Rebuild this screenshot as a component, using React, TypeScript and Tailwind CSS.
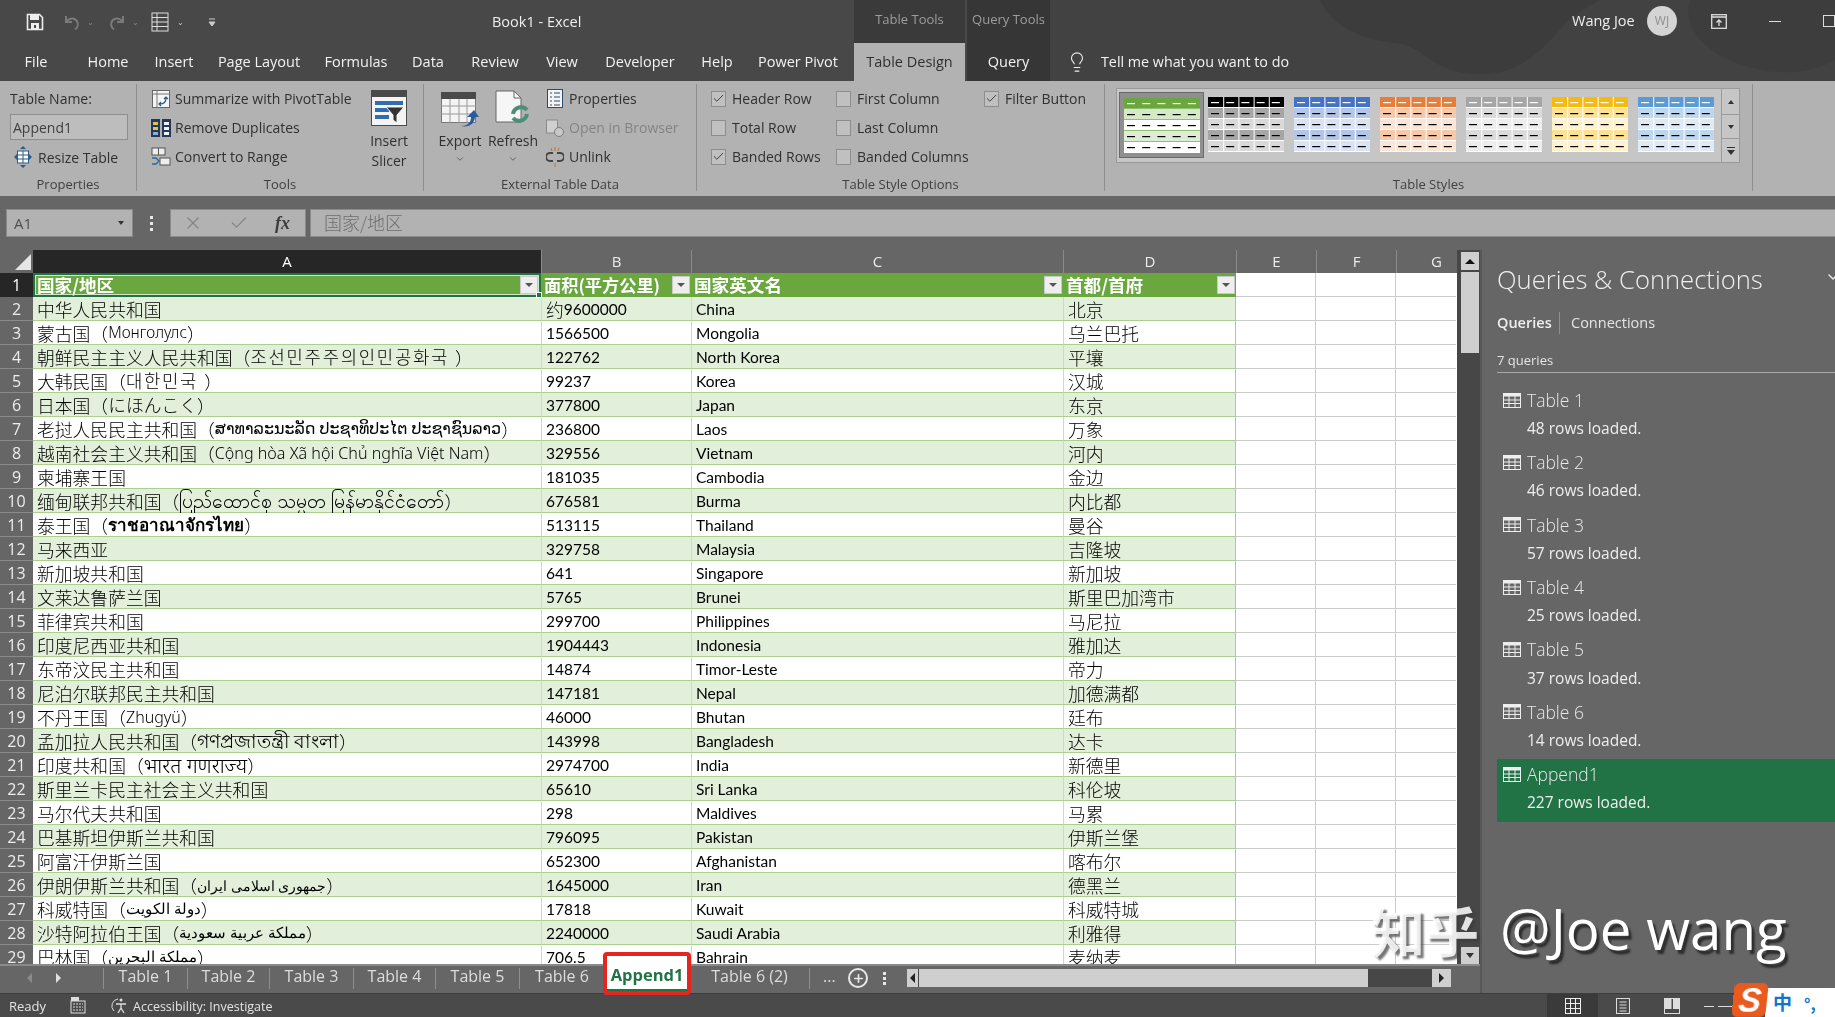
import { ChevronDown, Lightbulb, Plus, X, Check } from 'lucide-react'

const ui = 'font-["Open_Sans","Noto_Sans_CJK_SC",sans-serif]'

type Row = { name: string; native?: string; nativeClass?: string; area: string; en: string; capital: string }

const rows: Row[] = [
  { name: '中华人民共和国', area: '9600000', en: 'China', capital: '北京' },
  { name: '蒙古国', native: 'Монголулс', nativeClass: 'text-[15.5px]', area: '1566500', en: 'Mongolia', capital: '乌兰巴托' },
  { name: '朝鲜民主主义人民共和国', native: '조선민주주의인민공화국', nativeClass: 'tracking-[1.7px] mr-[6px]', area: '122762', en: 'North Korea', capital: '平壤' },
  { name: '大韩民国', native: '대한민국', nativeClass: 'tracking-[1.7px] mr-[6px]', area: '99237', en: 'Korea', capital: '汉城' },
  { name: '日本国', native: 'にほんこく', area: '377800', en: 'Japan', capital: '东京' },
  { name: '老挝人民民主共和国', native: 'ສາທາລະນະລັດ ປະຊາທິປະໄຕ ປະຊາຊົນລາວ', nativeClass: 'text-[15.9px] font-normal', area: '236800', en: 'Laos', capital: '万象' },
  { name: '越南社会主义共和国', native: 'Cộng hòa Xã hội Chủ nghĩa Việt Nam', nativeClass: 'text-[16.1px]', area: '329556', en: 'Vietnam', capital: '河内' },
  { name: '柬埔寨王国', area: '181035', en: 'Cambodia', capital: '金边' },
  { name: '缅甸联邦共和国', native: 'ပြည်ထောင်စု သမ္မတ မြန်မာနိုင်ငံတော်', nativeClass: 'text-[19.4px]', area: '676581', en: 'Burma', capital: '内比都' },
  { name: '泰王国', native: 'ราชอาณาจักรไทย', nativeClass: 'text-[17px] font-bold', area: '513115', en: 'Thailand', capital: '曼谷' },
  { name: '马来西亚', area: '329758', en: 'Malaysia', capital: '吉隆坡' },
  { name: '新加坡共和国', area: '641', en: 'Singapore', capital: '新加坡' },
  { name: '文莱达鲁萨兰国', area: '5765', en: 'Brunei', capital: '斯里巴加湾市' },
  { name: '菲律宾共和国', area: '299700', en: 'Philippines', capital: '马尼拉' },
  { name: '印度尼西亚共和国', area: '1904443', en: 'Indonesia', capital: '雅加达' },
  { name: '东帝汶民主共和国', area: '14874', en: 'Timor-Leste', capital: '帝力' },
  { name: '尼泊尔联邦民主共和国', area: '147181', en: 'Nepal', capital: '加德满都' },
  { name: '不丹王国', native: 'Zhugyü', nativeClass: 'text-[16px]', area: '46000', en: 'Bhutan', capital: '廷布' },
  { name: '孟加拉人民共和国', native: 'গণপ্রজাতন্ত্রী বাংলা', nativeClass: 'text-[18.5px]', area: '143998', en: 'Bangladesh', capital: '达卡' },
  { name: '印度共和国', native: 'भारत गणराज्य', nativeClass: 'text-[20.5px]', area: '2974700', en: 'India', capital: '新德里' },
  { name: '斯里兰卡民主社会主义共和国', area: '65610', en: 'Sri Lanka', capital: '科伦坡' },
  { name: '马尔代夫共和国', area: '298', en: 'Maldives', capital: '马累' },
  { name: '巴基斯坦伊斯兰共和国', area: '796095', en: 'Pakistan', capital: '伊斯兰堡' },
  { name: '阿富汗伊斯兰国', area: '652300', en: 'Afghanistan', capital: '喀布尔' },
  { name: '伊朗伊斯兰共和国', native: 'جمهوری اسلامی ایران', nativeClass: 'text-[14px]', area: '1645000', en: 'Iran', capital: '德黑兰' },
  { name: '科威特国', native: 'دولة الكويت', nativeClass: 'text-[14.5px]', area: '17818', en: 'Kuwait', capital: '科威特城' },
  { name: '沙特阿拉伯王国', native: 'مملكة عربية سعودية', nativeClass: 'text-[14.5px]', area: '2240000', en: 'Saudi Arabia', capital: '利雅得' },
  { name: '巴林国', native: 'مملكة البحرين', nativeClass: 'text-[14.5px]', area: '706.5', en: 'Bahrain', capital: '麦纳麦' },
]

const gridCols = 'grid grid-cols-[33px_508px_150px_372px_173px_80px_80px_60px]'

const tabs = [
  ['File', 'w-[72px]'],
  ['Home', 'w-[72px]'],
  ['Insert', 'w-[60px]'],
  ['Page Layout', 'w-[110px]'],
  ['Formulas', 'w-[84px]'],
  ['Data', 'w-[60px]'],
  ['Review', 'w-[74px]'],
  ['View', 'w-[60px]'],
  ['Developer', 'w-[96px]'],
  ['Help', 'w-[58px]'],
  ['Power Pivot', 'w-[104px]'],
]

const queries = [
  ['Table 1', '48'],
  ['Table 2', '46'],
  ['Table 3', '57'],
  ['Table 4', '25'],
  ['Table 5', '37'],
  ['Table 6', '14'],
  ['Append1', '227'],
]

const styleThumbs = [
  { head: '#000000', a: '#a6a6a6', b: '#d9d9d9', sep: '#ffffff' },
  { head: '#4472c4', a: '#b4c6e7', b: '#dae3f3', sep: '#ffffff' },
  { head: '#e67e3a', a: '#f6c9ab', b: '#fbe5d6', sep: '#ffffff' },
  { head: '#a5a5a5', a: '#dbdbdb', b: '#ededed', sep: '#ffffff' },
  { head: '#f5b90f', a: '#fbe295', b: '#fff2cc', sep: '#ffffff' },
  { head: '#5b9bd5', a: '#bdd7ee', b: '#deebf7', sep: '#ffffff' },
]

function Thumb({ head, a, b, sep }: { head: string; a: string; b: string; sep: string }) {
  const fills = [head, a, b, a, b]
  return (
    <svg width="76" height="55" viewBox="0 0 76 55" className="shrink-0">
      {fills.map((f, r) => (
        <g key={r}>
          <rect x="0" y={r * 11} width="76" height="11" fill={f} />
          <rect x="0" y={r * 11 + 10} width="76" height="1" fill={sep} />
          {[0, 1, 2, 3, 4].map(c => (
            <rect key={c} x={c * 15.2 + 3} y={r * 11 + 5} width="8" height="1.2" fill={r === 0 ? '#fff' : '#000'} />
          ))}
          {[1, 2, 3, 4].map(c => (
            <rect key={c} x={c * 15.2} y={r * 11} width="1" height="11" fill={sep} />
          ))}
        </g>
      ))}
    </svg>
  )
}

function GreenThumb() {
  const fills = ['#6aa83f', '#d5e8c8', '#ffffff', '#ddecd2', '#ffffff']
  return (
    <svg width="76" height="55" viewBox="0 0 76 55">
      {fills.map((f, r) => (
        <g key={r}>
          <rect x="0" y={r * 11} width="76" height="11" fill={f} />
          <rect x="0" y={r * 11 + 10} width="76" height="1" fill={r === 4 ? '#ffffff' : '#8fbf6f'} />
          {[0, 1, 2, 3, 4].map(c => (
            <rect key={c} x={c * 15.2 + 3} y={r * 11 + 5} width="8" height="1.2" fill={r === 0 ? '#fff' : '#000'} />
          ))}
        </g>
      ))}
    </svg>
  )
}

function TableIcon() {
  return (
    <svg width="18" height="15" viewBox="0 0 18 15">
      <rect x="0.5" y="0.5" width="17" height="14" fill="none" stroke="#eee" />
      <rect x="0" y="0" width="18" height="3.5" fill="#eee" />
      <path d="M0 7h18M0 10.5h18M6 3v12M12 3v12" stroke="#eee" fill="none" />
    </svg>
  )
}

function FilterBtn() {
  return (
    <span className="w-[18px] h-[18px] bg-[#eeeeee] flex items-center justify-center shrink-0 mr-[1px] border border-[#c8c8c8]">
      <span className="w-0 h-0 border-l-[4px] border-r-[4px] border-t-[4px] border-l-transparent border-r-transparent border-t-[#555]" />
    </span>
  )
}

function Box({ on }: { on?: boolean }) {
  return (
    <span className="w-[15px] h-[16px] bg-[#c0c0c0] border border-[#8d8d8d] flex items-center justify-center shrink-0">
      {on && <Check size={13} strokeWidth={1.5} className="text-[#222]" />}
    </span>
  )
}

function Opt({ label, on }: { label: string; on?: boolean }) {
  return (
    <div className="h-[29px] flex items-center gap-[6px]">
      <Box on={on} />
      <span className="whitespace-nowrap">{label}</span>
    </div>
  )
}

function SmallBtn({ icon, label, muted }: { icon: React.ReactNode; label: string; muted?: boolean }) {
  return (
    <div className={`h-[29px] flex items-center gap-1 whitespace-nowrap ${muted ? 'text-[#848484]' : ''}`}>
      <span className="w-5 h-5 flex items-center justify-center shrink-0">{icon}</span>
      {label}
    </div>
  )
}

function GroupLabel({ children }: { children: React.ReactNode }) {
  return <div className="h-5 shrink-0 mt-[4px] flex items-center justify-center text-[13px] text-[#404040] whitespace-nowrap">{children}</div>
}

function App() {
  return (
    <div className={`w-[1835px] h-[1017px] overflow-hidden relative flex flex-col bg-[#666666] text-[#303030] text-[14px] ${ui}`}>
      {/* title bar */}
      <div className="h-[43px] flex bg-[#484848] text-[#eeeeee] relative">
        <div className="w-[854px] flex items-center pl-[26px] gap-[18px] relative">
          <svg width="18" height="18" viewBox="0 0 18 18">
            <path d="M1.5 1.5h12l3 3v12h-15z" fill="none" stroke="#eee" strokeWidth="1.6" />
            <rect x="4" y="2" width="9" height="5" fill="#eee" />
            <rect x="5" y="10" width="8" height="6" fill="#eee" />
            <rect x="8" y="12" width="2" height="3" fill="#484848" />
          </svg>
          <svg width="18" height="18" viewBox="0 0 18 18" className="ml-[1px]">
            <path d="M3 3v6h6M3.5 8.5C6 5 11 4.5 13.5 7.5s1.5 7-1.5 9" fill="none" stroke="#7a7a7a" strokeWidth="2" />
          </svg>
          <span className="text-[#8a8a8a] text-[8px] -ml-[12px]">⌄</span>
          <svg width="18" height="18" viewBox="0 0 18 18" className="-ml-[4px]">
            <path d="M15 3v6H9M14.5 8.5C12 5 7 4.5 4.5 7.5s-1.5 7 1.5 9" fill="none" stroke="#7a7a7a" strokeWidth="2" />
          </svg>
          <span className="text-[#8a8a8a] text-[8px] -ml-[12px]">⌄</span>
          <svg width="18" height="20" viewBox="0 0 18 20" className="-ml-[6px]">
            <rect x="1" y="1" width="16" height="18" fill="none" stroke="#ddd" />
            <path d="M1 5.5h16M1 10h16M1 14.5h16M6 1v18" stroke="#ddd" />
          </svg>
          <span className="text-[#ccc] text-[8px] -ml-[10px]">⌄</span>
          <svg width="8" height="10" viewBox="0 0 8 10" className="ml-[6px]">
            <path d="M1 2h6M1 5h6l-3 4z" fill="#ccc" stroke="#ccc" />
          </svg>
          <span className="absolute left-[492px] top-[11px] text-[14.5px] whitespace-nowrap">Book1 - Excel</span>
        </div>
        <div className="w-[111px] bg-[#3a3a3a] text-[#9d9d9d] text-[13px] flex items-center justify-center pb-[3px]">Table Tools</div>
        <div className="w-[2px]" />
        <div className="w-[83px] bg-[#363636] text-[#9d9d9d] text-[13px] flex items-center justify-center pb-[3px]">Query Tools</div>
        <div className="flex-1 flex items-center bg-[#424242] pl-[522px] pb-[1px]">
          <span className="text-[14.5px] whitespace-nowrap w-[75px]">Wang Joe</span>
          <span className="w-[30px] h-[30px] rounded-full bg-[#d4d4d4] text-[#8f8f8f] text-[12px] flex items-center justify-center">WJ</span>
          <svg width="16" height="15" viewBox="0 0 16 15" className="ml-[34px]">
            <rect x="0.7" y="0.7" width="14.6" height="13.6" fill="none" stroke="#eee" strokeWidth="1.3" />
            <path d="M1 3h14M8 12V6M5.5 8.5L8 6l2.5 2.5" stroke="#eee" fill="none" strokeWidth="1.3" />
          </svg>
          <span className="w-[12px] h-[1px] bg-[#eee] ml-[42px]" />
          <span className="w-[12px] h-[12px] border border-[#eee] ml-[42px] shrink-0" />
        </div>
      </div>

      {/* ribbon tabs */}
      <div className="h-[38px] flex bg-[#484848] text-[#f2f2f2] text-[14.5px]">
        {tabs.map(([label, w]) => (
          <div key={label} className={`${w} flex items-center justify-center whitespace-nowrap`}>{label}</div>
        ))}
        <div className="w-[4px]" />
        <div className="w-[111px] bg-[#b2b2b2] text-[#303030] flex items-center justify-center whitespace-nowrap">Table Design</div>
        <div className="w-[2px]" />
        <div className="w-[83px] bg-[#363636] flex items-center justify-center">Query</div>
        <div className="flex-1 flex items-center bg-[#424242] pl-[16px]">
          <Lightbulb size={22} strokeWidth={1.2} className="text-[#eee]" />
          <span className="ml-[13px] text-[14.3px] whitespace-nowrap">Tell me what you want to do</span>
        </div>
      </div>

      {/* office theme artwork behind the title bar */}
      <svg width="785" height="81" viewBox="0 0 785 81" className="absolute left-[1050px] top-0 mix-blend-multiply pointer-events-none">
        <path d="M270 0c10 25 40 40 80 44 25 4 30 26 70 30 50 4 70-24 90-44 10-14 30-24 40-30z" fill="#e6e6e6" />
        <path d="M640 0c-10 30 20 60 70 70 30 6 60 0 75-10V0z" fill="#ececec" />
      </svg>

      {/* ribbon */}
      <div className="h-[115px] flex bg-[#b2b2b2] text-[14px]">
        <div className="w-[137px] h-[107px] mt-[3px] border-r border-[#8e8e8e] flex flex-col">
          <div className="h-[87px] shrink-0 pl-[10px]">
            <div className="h-[29px] flex items-center">Table Name:</div>
            <div className="h-[26px] mt-[1px] w-[118px] bg-[#bdbdbd] border border-[#8e8e8e] flex items-center pl-[2px] text-[#404040]">Append1</div>
            <div className="h-[34px] flex items-center gap-[6px] pl-[4px]">
              <svg width="18" height="22" viewBox="0 0 18 22">
                <path d="M9 0l3 3H6zM9 22l3-3H6zM0 11l3-3v6zM18 11l-3-3v6z" fill="#2b5c8a" />
                <rect x="3.5" y="5" width="11" height="12" fill="#fff" stroke="#2b5c8a" />
                <path d="M4 9h10M4 13h10M9 5v12" stroke="#2b5c8a" />
              </svg>
              <span className="whitespace-nowrap">Resize Table</span>
            </div>
          </div>
          <GroupLabel>Properties</GroupLabel>
        </div>

        <div className="w-[287px] h-[107px] mt-[3px] border-r border-[#8e8e8e] flex flex-col">
          <div className="h-[87px] shrink-0 flex">
            <div className="w-[234px] pl-[14px]">
              <SmallBtn label="Summarize with PivotTable" icon={
                <svg width="18" height="18" viewBox="0 0 18 18"><rect x="0.5" y="0.5" width="17" height="17" fill="#f4f4f4" stroke="#666" /><path d="M0 4h18M5 0v18" stroke="#777" /><path d="M8 14c4 0 6-2 6-6M12 9l2-2 2 2M9 12l-2 2 2 2" stroke="#1f5a8a" fill="none" strokeWidth="1.2" /></svg>
              } />
              <SmallBtn label="Remove Duplicates" icon={
                <svg width="20" height="18" viewBox="0 0 20 18"><rect x="0" y="0" width="9" height="18" fill="#26385a" /><rect x="11" y="0" width="9" height="18" fill="#26385a" /><rect x="2" y="3" width="5" height="3" fill="#e2c14a" /><rect x="2" y="8" width="5" height="3" fill="#e2c14a" /><rect x="2" y="13" width="5" height="3" fill="#85b0d8" /><rect x="13" y="3" width="5" height="3" fill="#f2f2f2" /><rect x="13" y="8" width="5" height="3" fill="#f2f2f2" /><rect x="13" y="13" width="5" height="3" fill="#f2f2f2" /></svg>
              } />
              <SmallBtn label="Convert to Range" icon={
                <svg width="20" height="20" viewBox="0 0 20 20"><rect x="1" y="1" width="13" height="7" fill="#eee" stroke="#555" /><path d="M7.5 1v7" stroke="#555" /><path d="M1 11h4l3 3-3 3H1" stroke="#2b6aa0" fill="none" strokeWidth="1.4" /><rect x="9" y="11" width="10" height="7" fill="#eee" stroke="#555" /></svg>
              } />
            </div>
            <div className="w-[36px] flex flex-col items-center shrink-0">
              <svg width="36" height="36" viewBox="0 0 36 36" className="mt-[6px] shrink-0">
                <rect x="0.5" y="0.5" width="35" height="35" fill="#f4f4f4" stroke="#4a4a4a" />
                <rect x="0" y="0" width="36" height="7" fill="#4a4a4a" />
                <rect x="4" y="11" width="28" height="4" fill="#2f6cb0" />
                <rect x="4" y="18" width="14" height="4" fill="#2f6cb0" />
                <rect x="4" y="25" width="14" height="4" fill="#2f6cb0" />
                <path d="M15 17h18l-7 8v8l-4-3v-5z" fill="#333" stroke="#f4f4f4" />
              </svg>
              <div className="mt-[5px] leading-[20px] text-center">Insert<br />Slicer</div>
            </div>
          </div>
          <GroupLabel>Tools</GroupLabel>
        </div>

        <div className="w-[273px] h-[107px] mt-[3px] border-r border-[#8e8e8e] flex flex-col">
          <div className="h-[87px] shrink-0 flex pl-[6px]">
            <div className="w-[60px] flex flex-col items-center">
              <svg width="38" height="36" viewBox="0 0 38 36" className="mt-[8px] shrink-0">
                <rect x="0.5" y="0.5" width="34" height="30" fill="#f4f4f4" stroke="#777" />
                <rect x="0" y="0" width="35" height="7" fill="#4a4a4a" />
                <path d="M0 14h35M0 22h35M9 7v24M18 7v24M26 7v24" stroke="#999" />
                <path d="M20 34c6 0 10-3 10-9h-4l7-7 5 7h-4c0 6-6 11-14 9z" fill="#2b5c9e" />
              </svg>
              <div className="mt-[3px] h-5 leading-5">Export</div>
              <ChevronDown size={10} className="mt-[3px] text-[#555]" />
            </div>
            <div className="w-[46px] flex flex-col items-center">
              <svg width="36" height="38" viewBox="0 0 36 38" className="mt-[6px] shrink-0">
                <path d="M1 1h18l7 7v24H1z" fill="#f6f6f6" stroke="#666" />
                <path d="M19 1v7h7" fill="none" stroke="#666" />
                <path d="M18 24a8 8 0 0 1 14-4M32 24a8 8 0 0 1-14 4" fill="none" stroke="#4c8f78" strokeWidth="4" />
              </svg>
              <div className="mt-[3px] h-5 leading-5">Refresh</div>
              <ChevronDown size={10} className="mt-[3px] text-[#555]" />
            </div>
            <div className="ml-[9px]">
              <SmallBtn label="Properties" icon={
                <svg width="16" height="19" viewBox="0 0 16 19"><rect x="0.5" y="0.5" width="15" height="18" fill="#f4f4f4" stroke="#2e4a6b" /><path d="M3 4h2M7 4h6M3 8h2M7 8h6M3 12h2M7 12h6M3 16h2M7 16h6" stroke="#2e4a6b" /></svg>
              } />
              <SmallBtn muted label="Open in Browser" icon={
                <svg width="18" height="18" viewBox="0 0 18 18"><rect x="0.5" y="1" width="11" height="13" fill="#d0d0d0" stroke="#8a8a8a" /><circle cx="13" cy="13" r="4.5" fill="#c8c8c8" stroke="#7d7d7d" /></svg>
              } />
              <SmallBtn label="Unlink" icon={
                <svg width="18" height="20" viewBox="0 0 18 20"><path d="M7 6H4a4 4 0 0 0 0 8h3M11 6h3a4 4 0 0 1 0 8h-3" fill="none" stroke="#444" strokeWidth="2" /><path d="M9 0v4M9 16v4M5 1l1 3M13 1l-1 3" stroke="#b5743a" /></svg>
              } />
            </div>
          </div>
          <GroupLabel>External Table Data</GroupLabel>
        </div>

        <div className="w-[408px] h-[107px] mt-[3px] border-r border-[#8e8e8e] flex flex-col">
          <div className="h-[87px] shrink-0 flex pl-[14px]">
            <div className="w-[125px]">
              <Opt label="Header Row" on />
              <Opt label="Total Row" />
              <Opt label="Banded Rows" on />
            </div>
            <div className="w-[148px]">
              <Opt label="First Column" />
              <Opt label="Last Column" />
              <Opt label="Banded Columns" />
            </div>
            <Opt label="Filter Button" on />
          </div>
          <GroupLabel>Table Style Options</GroupLabel>
        </div>

        <div className="w-[648px] h-[107px] mt-[3px] border-r border-[#8e8e8e] flex flex-col">
          <div className="h-[87px] shrink-0 pl-[11px] pt-[4px]">
            <div className="w-[624px] h-[75px] bg-[#c6c6c6] border border-[#9a9a9a] flex">
              <div className="ml-[2px] mt-[3px] w-[85px] h-[66px] bg-[#8f8f8f] border border-[#6a6a6a] flex items-center justify-center shrink-0">
                <GreenThumb />
              </div>
              <div className="flex gap-[10px] ml-[4px] mt-[8px] h-[55px]">
                {styleThumbs.map(t => <Thumb key={t.head} {...t} />)}
              </div>
              <div className="ml-auto w-[18px] flex flex-col border-l border-[#9a9a9a] text-[#333]">
                <div className="h-[26px] flex items-center justify-center border-b border-[#9a9a9a]"><span className="w-0 h-0 border-l-[3px] border-r-[3px] border-b-[4px] border-l-transparent border-r-transparent border-b-[#333]" /></div>
                <div className="h-[24px] flex items-center justify-center border-b border-[#9a9a9a]"><span className="w-0 h-0 border-l-[3px] border-r-[3px] border-t-[4px] border-l-transparent border-r-transparent border-t-[#333]" /></div>
                <div className="flex-1 flex flex-col items-center justify-center gap-[2px]"><span className="w-[8px] h-[1px] bg-[#333]" /><span className="w-0 h-0 border-l-[4px] border-r-[4px] border-t-[5px] border-l-transparent border-r-transparent border-t-[#333]" /></div>
              </div>
            </div>
          </div>
          <GroupLabel>Table Styles</GroupLabel>
        </div>
      </div>

      {/* formula bar */}
      <div className="h-[13px] bg-[#666666] shrink-0" />
      <div className="h-[28px] flex items-stretch pl-[6px] shrink-0">
        <div className="w-[127px] bg-[#b2b2b2] border border-[#8a8a8a] flex items-center justify-between pl-[7px] pr-[8px] text-[#505050] text-[15px]">
          A1
          <span className="w-0 h-0 border-l-[3px] border-r-[3px] border-t-[4px] border-l-transparent border-r-transparent border-t-[#333]" />
        </div>
        <div className="w-[37px] flex flex-col items-center justify-center gap-[3px]">
          <span className="w-[3px] h-[3px] bg-[#e8e8e8]" />
          <span className="w-[3px] h-[3px] bg-[#e8e8e8]" />
          <span className="w-[3px] h-[3px] bg-[#e8e8e8]" />
        </div>
        <div className="w-[136px] bg-[#b2b2b2] border border-[#8a8a8a] flex items-center pl-[12px]">
          <X size={20} strokeWidth={1.5} className="text-[#858585]" />
          <Check size={20} strokeWidth={1.5} className="text-[#858585] ml-[26px]" />
          <span className="ml-[26px] italic font-bold font-['Liberation_Serif',serif] text-[18px] text-[#3c3c3c]">fx</span>
        </div>
        <div className="flex-1 ml-[4px] bg-[#b2b2b2] border-y border-[#8a8a8a] border-l flex items-center pl-[13px] pb-[2px] text-[#6e6e6e] text-[18px] font-['Noto_Sans_CJK_SC',sans-serif] font-light">国家/地区</div>
      </div>
      <div className="h-[13px] bg-[#666666] shrink-0" />

      {/* sheet + pane */}
      <div className="flex-1 flex min-h-0">
        <div className="w-[1482px] flex flex-col min-h-0 border-r-2 border-[#575757]">
          <div className="flex-1 flex min-h-0">
            <div className="w-[1457px] overflow-hidden bg-white flex flex-col">
              {/* column headers */}
              <div className={`${gridCols} grid-rows-[23px] h-[23px] shrink-0 bg-[#666666] text-[#ececec] text-[15px]`}>
                <div className="flex items-end justify-end pr-[2px] pb-[3px]">
                  <svg width="16" height="16" viewBox="0 0 16 16"><path d="M16 0v16H0z" fill="#e6e6e6" /></svg>
                </div>
                <div className="bg-[#262626] text-white flex items-center justify-center">A</div>
                {['B', 'C', 'D', 'E', 'F'].map(c => (
                  <div key={c} className="flex items-center justify-center border-l border-[#8a8a8a]">{c}</div>
                ))}
                <div className="flex items-center justify-center border-l border-[#8a8a8a] pl-[20px]">G</div>
              </div>

              {/* table header */}
              <div className={`${gridCols} grid-rows-[24px] h-6 shrink-0 text-white font-bold text-[17.6px] font-['Noto_Sans_CJK_SC',sans-serif]`}>
                <div className="bg-[#262626] font-normal text-[16px] text-white flex items-center justify-center font-['Open_Sans',sans-serif]">1</div>
                <div className="bg-[#6aa83f] border-2 border-[#217346] outline outline-[#d0e6c4] -outline-offset-3 flex items-center justify-between pl-[2px] relative">
                  <span>国家/地区</span>
                  <FilterBtn />
                  <span className="absolute -right-[3px] -bottom-[3px] w-[6px] h-[6px] bg-[#217346] border border-white" />
                </div>
                <div className="bg-[#6aa83f] flex items-center justify-between pl-[3px] overflow-hidden"><span className="text-[17.2px] whitespace-nowrap">面积(平方公里)</span><FilterBtn /></div>
                <div className="bg-[#6aa83f] flex items-center justify-between pl-[3px]"><span>国家英文名</span><FilterBtn /></div>
                <div className="bg-[#6aa83f] flex items-center justify-between pl-[3px]"><span>首都/首府</span><FilterBtn /></div>
                <div className="border-b border-[#cccccc] border-r" />
                <div className="border-b border-[#cccccc] border-r" />
                <div className="border-b border-[#cccccc]" />
              </div>

              {/* data rows */}
              {rows.map((r, i) => {
                const band = i % 2 === 0 ? 'bg-[#e2efda]' : 'bg-white'
                return (
                  <div key={r.name} className={`${gridCols} grid-rows-[24px] h-6 shrink-0 text-black`}>
                    <div className="bg-[#666666] text-[#ececec] border-b border-[#8a8a8a] text-[16px] flex items-center justify-center">{i + 2}</div>
                    <div className={`${band} border-b border-[#a9d08e] pl-1 pt-[1px] flex items-center whitespace-nowrap text-[17.8px] font-light font-['Noto_Sans_CJK_SC',sans-serif]`}>
                      {r.name}
                      {r.native && (
                        <>
                          （<span className={`font-['Noto_Sans','Noto_Sans_CJK_SC','DejaVu_Sans',sans-serif] ${r.nativeClass ?? ''}`}>{r.native}</span>）
                        </>
                      )}
                    </div>
                    <div className={`${band} border-b border-l border-b-[#a9d08e] border-l-[#d4d4d4] pl-1 pt-[2px] flex items-center text-[15.5px] font-['Lato',sans-serif]`}>
                      {i === 0 && <span className="text-[17.8px] font-light font-['Noto_Sans_CJK_SC',sans-serif]">约</span>}
                      {r.area}
                    </div>
                    <div className={`${band} border-b border-l border-b-[#a9d08e] border-l-[#d4d4d4] pl-1 pt-[2px] flex items-center text-[15.5px] font-['Lato',sans-serif]`}>{r.en}</div>
                    <div className={`${band} border-b border-l border-r border-b-[#a9d08e] border-l-[#d4d4d4] border-r-[#a9d08e] pl-1 pt-[1px] flex items-center text-[17.8px] font-light font-['Noto_Sans_CJK_SC',sans-serif]`}>{r.capital}</div>
                    <div className="bg-white border-b border-r border-[#cccccc]" />
                    <div className="bg-white border-b border-r border-[#cccccc]" />
                    <div className="bg-white border-b border-[#cccccc]" />
                  </div>
                )
              })}
            </div>

            {/* vertical scrollbar */}
            <div className="w-[23px] bg-[#474747] flex flex-col items-center pl-[3px] pt-[2px]">
              <div className="w-[18px] h-[18px] bg-[#cfcfcf] flex items-center justify-center"><span className="w-0 h-0 border-l-[5px] border-r-[5px] border-b-[5px] border-l-transparent border-r-transparent border-b-[#111]" /></div>
              <div className="w-[18px] h-[81px] mt-[2px] bg-[#cfcfcf]" />
              <div className="mt-auto w-[18px] h-[17px] bg-[#cfcfcf] flex items-center justify-center"><span className="w-0 h-0 border-l-[4px] border-r-[4px] border-t-[5px] border-l-transparent border-r-transparent border-t-[#333]" /></div>
            </div>
          </div>

          {/* sheet tabs */}
          <div className="h-[29px] shrink-0 flex items-center pb-[3px] border-t-2 border-[#8a8a8a] text-[#dddddd] text-[16px]">
            <div className="w-[103px] flex items-center pl-[27px] gap-[24px] text-[10px]">
              <span className="w-0 h-0 border-r-[5px] border-y-[5px] border-y-transparent border-r-[#8a8a8a]" />
              <span className="w-0 h-0 border-l-[5px] border-y-[5px] border-y-transparent border-l-[#e0e0e0]" />
            </div>
            {[['Table 1', 'w-[84px]'], ['Table 2', 'w-[82px]'], ['Table 3', 'w-[84px]'], ['Table 4', 'w-[82px]'], ['Table 5', 'w-[84px]'], ['Table 6', 'w-[85px]']].map(([t, w]) => (
              <div key={t} className={`${w} h-[21px] border-l border-[#8f8f8f] flex items-center justify-center whitespace-nowrap pb-[5px]`}>{t}</div>
            ))}
            <div className="w-[86px] h-[28px] bg-white text-[#217346] text-[16.5px] font-bold flex items-center justify-center border-b-[3px] border-[#217346] whitespace-nowrap pb-[2px]">Append1</div>
            <div className="w-[120px] h-[21px] border-r border-[#8f8f8f] flex items-center justify-center whitespace-nowrap pb-[5px]">Table 6 (2)</div>
            <span className="ml-[13px] w-[20px] pb-[5px]">...</span>
            <span className="ml-[5px] w-[20px] h-[20px] rounded-full border-2 border-[#e8e8e8] flex items-center justify-center"><Plus size={13} strokeWidth={3} className="text-[#e8e8e8]" /></span>
            <span className="ml-[15px] flex flex-col gap-[2px]"><span className="w-[3px] h-[3px] bg-[#e8e8e8]" /><span className="w-[3px] h-[3px] bg-[#e8e8e8]" /><span className="w-[3px] h-[3px] bg-[#e8e8e8]" /></span>
            <div className="ml-[21px] w-[544px] h-[18px] bg-[#474747] flex">
              <span className="w-[11px] bg-[#cfcfcf] flex items-center justify-center"><span className="w-0 h-0 border-r-[5px] border-y-[5px] border-y-transparent border-r-[#222]" /></span>
              <span className="w-[449px] ml-[1px] bg-[#cfcfcf]" />
              <span className="ml-auto w-[19px] bg-[#cfcfcf] flex items-center justify-center"><span className="w-0 h-0 border-l-[5px] border-y-[5px] border-y-transparent border-l-[#222]" /></span>
            </div>
          </div>
        </div>

        {/* queries pane */}
        <div className="flex-1 pl-[15px] text-[#eeeeee] relative">
          <div className="text-[25.6px] font-light leading-[36px] mt-[12px] whitespace-nowrap">Queries &amp; Connections</div>
          <ChevronDown size={16} className="absolute right-[-6px] top-[19px] text-[#eee]" />
          <div className="flex items-center h-[24px] mt-[13px] text-[14.5px]">
            <span className="font-semibold w-[62px]">Queries</span>
            <span className="w-[1px] h-[22px] bg-[#8f8f8f]" />
            <span className="ml-[11px] text-[#e4e4e4]">Connections</span>
          </div>
          <div className="mt-[14px] h-[24px] flex items-center text-[13px] border-b border-[#a8a8a8] text-[#e4e4e4]">7 queries</div>
          <div className="mt-[12px]">
            {queries.map(([name, n]) => (
              <div key={name} className={`h-[62.4px] pl-[6px] pt-[3px] ${name === 'Append1' ? 'bg-[#217346]' : ''}`}>
                <div className="flex items-center gap-[6px] h-[24px] text-[17.5px] font-light text-[#e8e8e8]">
                  <TableIcon />
                  {name}
                </div>
                <div className="pl-[24px] mt-[5px] text-[15.5px] leading-[22px]">{n} rows loaded.</div>
              </div>
            ))}
          </div>
        </div>
      </div>

      {/* status bar */}
      <div className="h-[24px] shrink-0 bg-[#4a4a4a] border-t border-[#3c3c3c] flex items-center text-[#e4e4e4] text-[12.5px]">
        <span className="ml-[9px] w-[61px] text-[13px] pt-[3px]">Ready</span>
        <svg width="16" height="17" viewBox="0 0 16 17">
          <rect x="1" y="4" width="14" height="12" fill="none" stroke="#ddd" />
          <path d="M3 7h10M3 10h10M3 13h10" stroke="#ddd" strokeDasharray="2 1" />
          <rect x="1" y="0" width="8" height="4" fill="#ddd" />
        </svg>
        <svg width="20" height="18" viewBox="0 0 20 18" className="ml-[24px]">
          <path d="M8 2a7 7 0 0 0-4 12" fill="none" stroke="#ddd" />
          <circle cx="11" cy="3" r="1.5" fill="#ddd" />
          <path d="M6 7h10M11 7v4l-3 5M11 11l3 5" stroke="#ddd" fill="none" strokeWidth="1.3" />
        </svg>
        <span className="ml-[3px] pt-[3px]">Accessibility: Investigate</span>
        <div className="ml-auto flex items-center h-full mr-[139px]">
          <span className="w-[51px] h-full bg-[#3a3a3a] flex items-center justify-center">
            <svg width="16" height="16" viewBox="0 0 16 16"><rect x="0.5" y="0.5" width="15" height="15" fill="none" stroke="#eee" /><path d="M0 5.5h16M0 10.5h16M5.5 0v16M10.5 0v16" stroke="#eee" /></svg>
          </span>
          <span className="w-[49px] flex justify-center">
            <svg width="14" height="16" viewBox="0 0 14 16"><rect x="0.5" y="0.5" width="13" height="15" fill="none" stroke="#ddd" /><path d="M3.5 4h7M3.5 7h7M3.5 10h7M3.5 13h7" stroke="#ddd" /></svg>
          </span>
          <span className="w-[49px] flex justify-center">
            <svg width="16" height="16" viewBox="0 0 16 16"><rect x="0.5" y="0.5" width="15" height="15" fill="none" stroke="#ddd" /><rect x="1" y="1" width="6.5" height="10" fill="#ddd" /><rect x="9" y="1" width="6" height="10" fill="#ddd" /></svg>
          </span>
        </div>
      </div>

      {/* zoom slider stub and ime overlay */}
      <div className="absolute left-[1704px] bottom-[10px] w-[10px] h-[1px] bg-[#ddd]" />
      <div className="absolute left-[1718px] bottom-[10px] w-[16px] h-[1px] bg-[#ddd]" />
      <div className="absolute left-[1765px] top-[988px] w-[70px] h-[29px] bg-white text-[#1675c9] flex items-center pl-[8px] font-['Noto_Sans_CJK_SC',sans-serif] font-bold text-[19px]">
        中<span className="ml-[12px] text-[16px]">°,</span>
      </div>
      <div className="absolute left-[1733px] top-[983px] w-[34px] h-[34px] bg-[#ea5a1f] rounded-[6px] -skew-x-6 flex items-center justify-center text-white font-['Liberation_Sans',sans-serif] font-bold italic text-[34px] leading-none">S</div>

      {/* red highlight */}
      <div className="absolute left-[603px] top-[952px] w-[88px] h-[43px] border-[4px] border-[#e3261f] rounded-[4px] pointer-events-none" />

      {/* watermark */}
      <div className="absolute left-[1371px] top-[895px] text-[54px] leading-[70px] text-white/85 font-['Noto_Sans_CJK_SC',sans-serif] font-bold [text-shadow:3px_3px_2px_rgba(60,60,60,0.7)] whitespace-nowrap">知乎</div>
      <div className="absolute left-[1500px] top-[891px] text-[56.5px] leading-[76px] text-white font-['Open_Sans',sans-serif] [text-shadow:3px_4px_2px_#2d2d2d] whitespace-nowrap">@Joe wang</div>
    </div>
  )
}

export default App
